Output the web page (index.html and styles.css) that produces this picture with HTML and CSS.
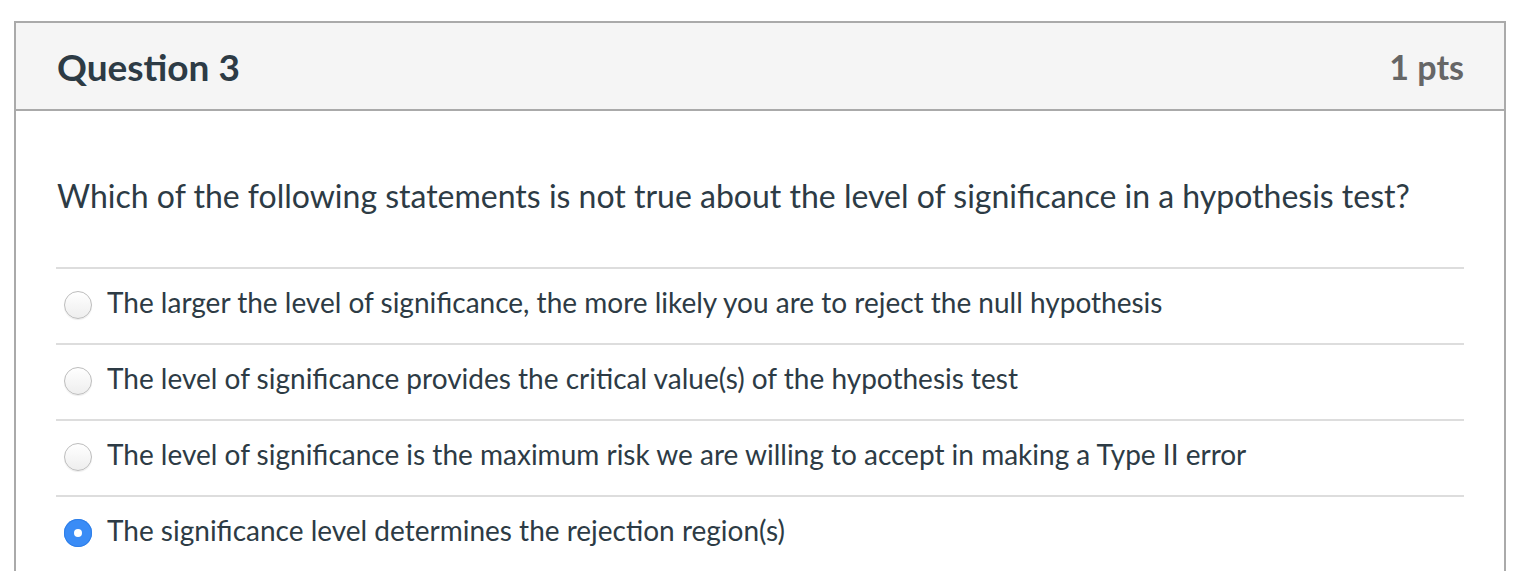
FILE: index.html
```html
<!DOCTYPE html>
<html>
<head>
<meta charset="utf-8">
<link rel="stylesheet" href="styles.css">
</head>
<body>
<div class="question">
  <div class="header">
    <h2 class="title">Question 3</h2>
    <span class="pts">1 pts</span>
  </div>
  <div class="content">
    <p class="text">Which of the following statements is not true about the level of significance in a hypothesis test?</p>
    <div class="answers">
      <label class="answer"><span class="radio"></span><span class="label">The larger the level of significance, the more likely you are to reject the null hypothesis</span></label>
      <label class="answer"><span class="radio"></span><span class="label">The level of significance provides the critical value(s) of the hypothesis test</span></label>
      <label class="answer"><span class="radio"></span><span class="label">The level of significance is the maximum risk we are willing to accept in making a Type II error</span></label>
      <label class="answer"><span class="radio checked"></span><span class="label">The significance level determines the rejection region(s)</span></label>
    </div>
  </div>
</div>
</body>
</html>
```
FILE: styles.css
```css
html, body {
  margin: 0;
  padding: 0;
  background: #fff;
}
body {
  font-family: Lato, "Open Sans", sans-serif;
  color: #2d3b45;
  padding: 21px 25px 0 14px;
}
.question {
  border: 2px solid #aaaaaa;
  border-bottom: none;
}
.header {
  display: flex;
  justify-content: space-between;
  align-items: center;
  background: #f5f5f5;
  border-bottom: 2px solid #aaaaaa;
  height: 86px;
  padding: 0 40px 0 41px;
}
.title {
  margin: 0;
  font-size: 37px;
  font-weight: 700;
  color: #2d3b45;
}
.pts {
  font-size: 34px;
  font-weight: 700;
  color: #666666;
}
.content {
  padding: 0 40px 0 40px;
}
.text {
  margin: 0;
  padding: 66px 0 0 1px;
  height: 90px;
  font-size: 32px;
  line-height: 38px;
}
.answers {
  display: flex;
  flex-direction: column;
}
.answer {
  display: flex;
  align-items: center;
  height: 74px;
  border-top: 2px solid #dddddd;
  padding-left: 8px;
}
.radio {
  box-sizing: border-box;
  width: 28px;
  height: 28px;
  border-radius: 50%;
  border: 1.5px solid #bdbdbd;
  background: linear-gradient(#ffffff, #eeeeee);
  box-shadow: 0 1px 1px rgba(0, 0, 0, 0.08);
  flex-shrink: 0;
  margin-right: 15px;
  margin-bottom: 3px;
  display: flex;
  align-items: center;
  justify-content: center;
}
.radio.checked {
  border: none;
  background: #3a8cf6;
  box-shadow: inset 0 0 0 1px #2f7fe8;
}
.radio.checked::after {
  content: "";
  width: 8px;
  height: 8px;
  border-radius: 50%;
  background: #fff;
}
.label {
  font-size: 28px;
  line-height: 34px;
  padding-bottom: 8px;
}
```
